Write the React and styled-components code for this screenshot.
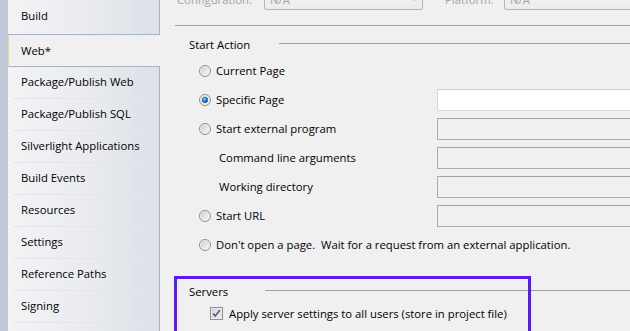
import React from "react";
import styled, { createGlobalStyle } from "styled-components";

const GlobalStyle = createGlobalStyle`
  html, body {
    margin: 0;
    padding: 0;
    background: #f0f0f0;
    overflow: hidden;
  }
  body {
    font-family: "Open Sans", "Noto Sans", sans-serif;
    font-size: 11.3px;
    color: #000;
  }
`;

const Window = styled.div`
  display: flex;
  width: 630px;
  height: 331px;
  overflow: hidden;
  background: #f0f0f0;
`;

const Sidebar = styled.div`
  flex: 0 0 160px;
  display: flex;
  flex-direction: column;
  padding-left: 8px;
  box-sizing: border-box;
  background: #bfc9d7;
`;

const Tab = styled.div`
  position: relative;
  flex: ${(p) => (p.$fill ? "1 0 auto" : "0 0 auto")};
  display: flex;
  align-items: center;
  box-sizing: border-box;
  height: ${(p) => p.$h || 32}px;
  padding: 0 0 ${(p) => (p.$selected ? 0 : 3)}px 13px;
  white-space: nowrap;
  background: ${(p) =>
    p.$selected ? "#f0f0f0" : "linear-gradient(to right, #f3f3f5 0%, #e9ebef 55%, #dce0e7 100%)"};
  border-right: ${(p) => (p.$selected ? "none" : "1px solid #a8b2c2")};
  border-left: ${(p) => (p.$selected ? "1px solid #f2d68a" : "none")};
  padding-left: ${(p) => (p.$selected ? 12 : 13)}px;
  border-bottom: ${(p) => (p.$edge ? "1px solid #a8b2c2" : "none")};

  &::after {
    content: "";
    display: ${(p) => (p.$edge || p.$selected || p.$fill ? "none" : "block")};
    position: absolute;
    left: 5px;
    right: 12px;
    bottom: 0;
    height: 1px;
    background: #e2e5e9;
  }
`;

const Content = styled.div`
  flex: 1;
  display: flex;
  flex-direction: column;
  padding-left: 15px;
  min-width: 0;
`;

const ConfigRow = styled.div`
  display: flex;
  align-items: center;
  height: 22px;
  margin-top: -12px;
  color: #a3a3a3;
`;

const ConfigLabel = styled.span`
  box-sizing: border-box;
  flex: 0 0 ${(p) => p.$w}px;
  padding-left: ${(p) => p.$pad || 0}px;
  white-space: nowrap;
`;

const Combo = styled.div`
  position: relative;
  box-sizing: border-box;
  flex: 0 0 ${(p) => p.$w}px;
  height: 22px;
  display: flex;
  align-items: center;
  padding-left: 5px;
  border: 1px solid #b4b4b4;
  border-radius: 2px;
  background: linear-gradient(#f4f4f4, #ececec);
  color: #a3a3a3;
`;

const ComboArrow = styled.span`
  position: absolute;
  right: 5px;
  top: 9px;
  width: 0;
  height: 0;
  border-left: 3px solid transparent;
  border-right: 3px solid transparent;
  border-top: 3px solid #b0b0b0;
`;

const Rule = styled.div`
  height: 1px;
  background: #a0a0a0;
  margin-top: 15px;
`;

const Group = styled.div`
  position: relative;
  display: flex;
  flex-direction: column;
  margin-top: ${(p) => p.$top || 0}px;
`;

const GroupHeader = styled.div`
  display: flex;
  align-items: center;
  height: 18px;
  margin-bottom: ${(p) => p.$gap || 0}px;
`;

const GroupTitle = styled.span`
  flex: 0 0 ${(p) => p.$w}px;
  box-sizing: border-box;
  padding-left: 14px;
`;

const GroupLine = styled.div`
  flex: 1;
  height: 1px;
  background: #a0a0a0;
  margin-top: -2px;
`;

const OptionRow = styled.div`
  display: flex;
  align-items: center;
  height: 29px;
  padding-left: 24px;
  white-space: nowrap;
`;

const OptionLabel = styled.label`
  flex: 0 0 238px;
  display: flex;
  align-items: center;
  gap: 5px;
  padding-left: ${(p) => p.$indent || 0}px;
  box-sizing: border-box;
`;

const TextBox = styled.div`
  flex: 0 0 260px;
  box-sizing: border-box;
  height: 22px;
  border: 1px solid ${(p) => (p.$enabled ? "#d9d9d9" : "#ababab")};
  border-top-color: ${(p) => (p.$enabled ? "#cfcfcf" : "#a5a5a5")};
  background: ${(p) => (p.$enabled ? "#fff" : "#f0f0f0")};
  border-radius: 1px;
`;

const CheckRow = styled.div`
  display: flex;
  align-items: center;
  gap: 6px;
  height: 26px;
  padding-left: 35px;
  white-space: nowrap;
`;

const Highlight = styled.div`
  position: absolute;
  left: -1px;
  top: -6px;
  width: 357px;
  height: 120px;
  box-sizing: border-box;
  border: 3px solid #5b19f8;
  pointer-events: none;
`;

const Radio = ({ checked }) => (
  <svg width="12" height="12" viewBox="0 0 12 12">
    <defs>
      <linearGradient id="rgFill" x1="0" y1="0" x2="1" y2="1">
        <stop offset="0" stopColor="#cfcfcf" />
        <stop offset="1" stopColor="#f8f8f8" />
      </linearGradient>
      <radialGradient id="rgDot" cx="0.4" cy="0.35" r="0.7">
        <stop offset="0" stopColor="#8fd3ff" />
        <stop offset="0.5" stopColor="#1d7fcf" />
        <stop offset="1" stopColor="#0b3f78" />
      </radialGradient>
    </defs>
    <circle cx="6" cy="6" r="5.5" fill="#f4f4f4" stroke="#8c8c8c" strokeWidth="1" />
    <circle cx="6" cy="6" r="4.2" fill="url(#rgFill)" />
    {checked && <circle cx="6" cy="6" r="2.8" fill="url(#rgDot)" stroke="#1b4f86" strokeWidth="0.5" />}
  </svg>
);

const CheckBox = () => (
  <svg width="13" height="13" viewBox="0 0 13 13">
    <defs>
      <linearGradient id="cbFill" x1="0" y1="0" x2="1" y2="1">
        <stop offset="0" stopColor="#d6d6d6" />
        <stop offset="1" stopColor="#f6f6f6" />
      </linearGradient>
    </defs>
    <rect x="0.5" y="0.5" width="12" height="12" fill="#fff" stroke="#8e8f8f" />
    <rect x="2" y="2" width="9" height="9" fill="url(#cbFill)" stroke="#b8b8b8" strokeWidth="0.5" />
    <path d="M3.2 6.6 L5.3 9 L9.8 3.2" fill="none" stroke="#4a5f97" strokeWidth="1.6" />
  </svg>
);

const tabs = [
  "Package/Publish Web",
  "Package/Publish SQL",
  "Silverlight Applications",
  "Build Events",
  "Resources",
  "Settings",
  "Reference Paths",
  "Signing",
];

const options = [
  { label: "Current Page", radio: true },
  { label: "Specific Page", radio: true, checked: true, box: "on" },
  { label: "Start external program", radio: true, box: "off" },
  { label: "Command line arguments", indent: 20, box: "off" },
  { label: "Working directory", indent: 20, box: "off" },
  { label: "Start URL", radio: true, box: "off" },
];

export default function App() {
  return (
    <>
      <GlobalStyle />
      <Window>
        <Sidebar>
          <Tab $h={35} $edge>Build</Tab>
          <Tab $h={32} $selected $edge>Web*</Tab>
          {tabs.map((t) => (
            <Tab key={t}>{t}</Tab>
          ))}
          <Tab $fill $h={8} />
        </Sidebar>
        <Content>
          <ConfigRow>
            <ConfigLabel $w={89} $pad={2}>Configuration:</ConfigLabel>
            <Combo $w={159}>
              N/A
              <ComboArrow />
            </Combo>
            <ConfigLabel $w={81} $pad={22}>Platform:</ConfigLabel>
            <Combo $w={200}>N/A</Combo>
          </ConfigRow>
          <Rule />
          <Group $top={9}>
            <GroupHeader $gap={3}>
              <GroupTitle $w={104}>Start Action</GroupTitle>
              <GroupLine />
            </GroupHeader>
            {options.map((o) => (
              <OptionRow key={o.label}>
                <OptionLabel $indent={o.indent}>
                  {o.radio && <Radio checked={o.checked} />}
                  {o.label}
                </OptionLabel>
                {o.box && <TextBox $enabled={o.box === "on"} />}
              </OptionRow>
            ))}
            <OptionRow>
              <OptionLabel>
                <Radio />
                Don't open a page.&nbsp; Wait for a request from an external application.
              </OptionLabel>
            </OptionRow>
          </Group>
          <Group $top={23}>
            <GroupHeader>
              <GroupTitle $w={90}>Servers</GroupTitle>
              <GroupLine />
            </GroupHeader>
            <CheckRow>
              <CheckBox />
              Apply server settings to all users (store in project file)
            </CheckRow>
            <Highlight />
          </Group>
        </Content>
      </Window>
    </>
  );
}
